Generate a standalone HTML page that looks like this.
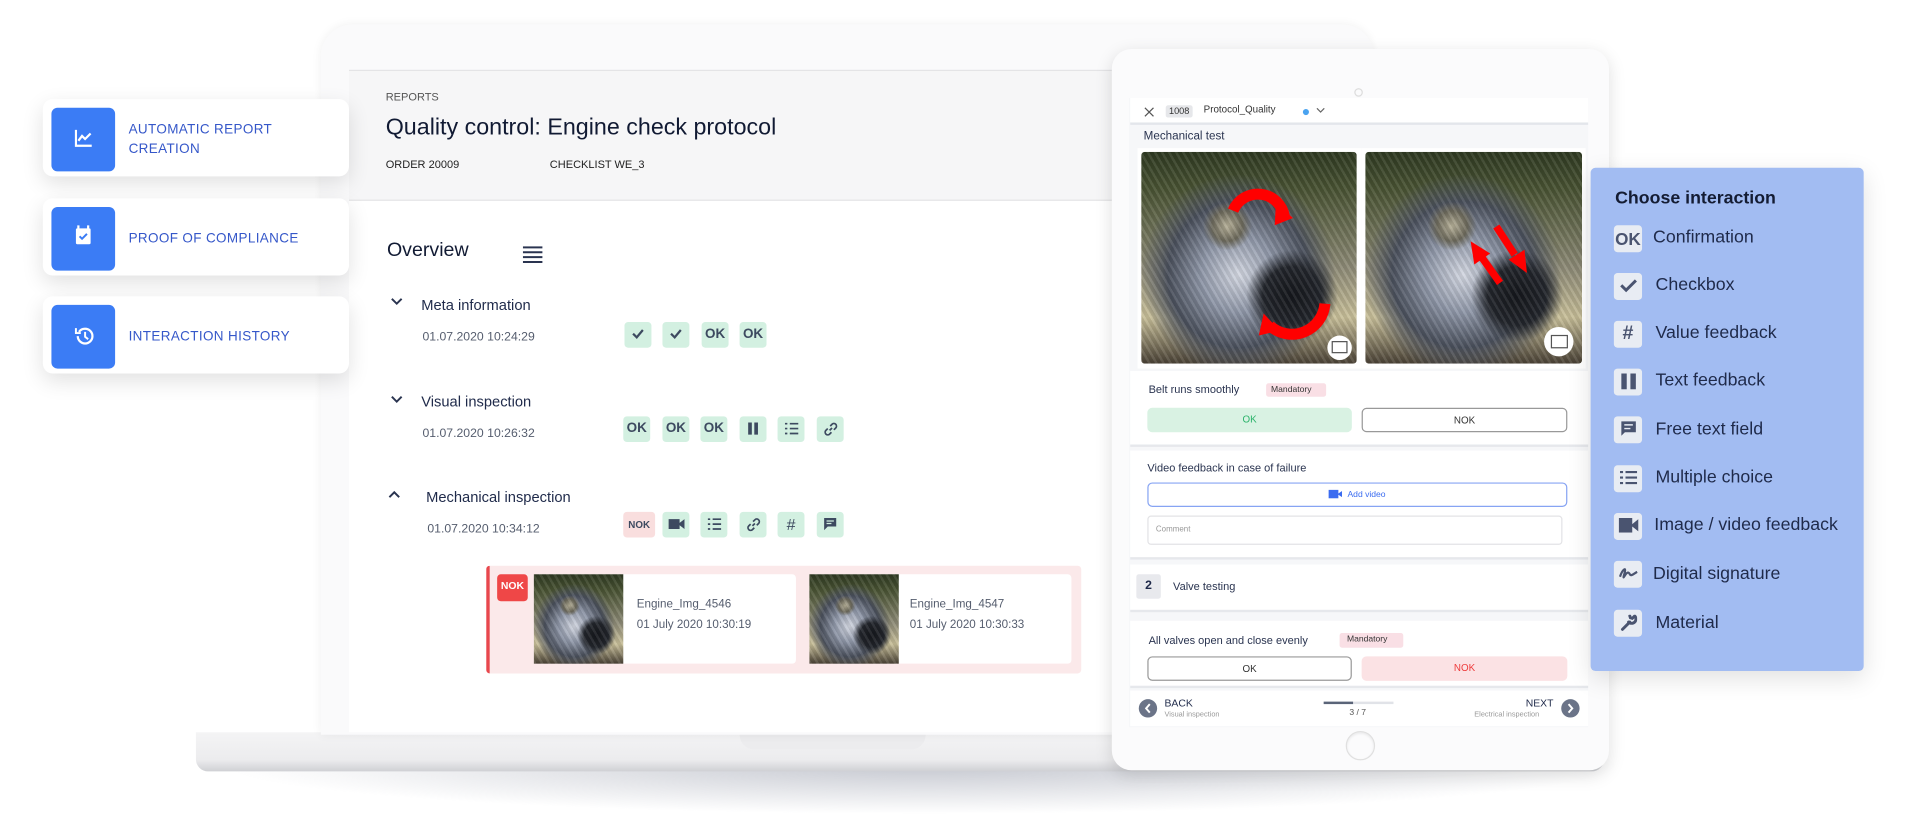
<!DOCTYPE html>
<html><head><meta charset="utf-8"><style>
*{box-sizing:border-box;margin:0;padding:0}
body{width:1920px;height:838px;overflow:hidden;background:#fff;font-family:"Liberation Sans",sans-serif;color:#1f2a4a}
#w{position:absolute;left:0;top:0;width:1568px;height:684px;transform:scale(1.22449);transform-origin:0 0}
.a{position:absolute}
.card{position:absolute;left:35px;width:250px;background:#fff;border-radius:8px;box-shadow:0 6px 18px rgba(0,0,0,.12)}
.card .ic{position:absolute;left:7px;top:7px;width:52px;height:52px;background:#3b7cf5;border-radius:5px}
.card .t{position:absolute;left:70px;font-size:11px;letter-spacing:.3px;color:#3557c9;line-height:16px}
.chip{position:absolute;width:22px;height:21px;background:#d3f0e1;border-radius:3px;font-size:11px;font-weight:bold;color:#3d4a60;text-align:center;line-height:21px}
.chip svg{margin-top:5px}
.sec{position:absolute;font-size:12px;color:#1f2a4a}
.dt{position:absolute;font-size:10px;color:#555d6e}
.pi{position:absolute;left:1319px;font-size:14.5px;color:#1f2a4a}
.pb{position:absolute;left:1318px;width:23px;height:22px;background:#e8ecf3;border-radius:3px;text-align:center;font-weight:bold;font-size:14px;color:#4a5470;line-height:22px}
.pb svg{margin-top:4px}
.eng{background:
repeating-linear-gradient(60deg,rgba(255,255,255,.08) 0 2px,rgba(0,0,0,.08) 2px 5px),
radial-gradient(circle at 70% 68%,#15171c 0,#23262c 14%,transparent 22%),
radial-gradient(circle at 40% 35%,#b8b29a 0,#6d6a5c 8%,transparent 13%),
radial-gradient(ellipse at 45% 58%,#d4d8e2 0,#8f97a8 22%,#4a505c 42%,transparent 58%),
linear-gradient(180deg,#2f3a22 0,#4a5434 18%,#8f8c78 55%,#c9c09a 78%,#4a4236 100%)}
.tb{position:absolute;left:923px;width:374px;background:#fff;border-bottom:2px solid #e6e8ec}
.btn{position:absolute;height:20px;border-radius:4px;font-size:8px;text-align:center;line-height:20px}
</style></head><body><div id="w">
<div class="a" style="left:180px;top:615px;width:1150px;height:50px;background:radial-gradient(ellipse at 50% 20%,rgba(150,155,170,.55),rgba(255,255,255,0) 70%)"></div>
<div class="a" style="left:160px;top:598px;width:1150px;height:32px;background:linear-gradient(#f4f4f5,#ececee 70%,#cfd0d4);border-radius:0 0 10px 10px"></div>
<div class="a" style="left:604px;top:598px;width:152px;height:14px;background:#ececee;border-radius:0 0 12px 12px"></div>
<div class="a" style="left:262px;top:20px;width:860px;height:580px;background:#fafafb;border-radius:26px 26px 0 0;box-shadow:0 0 8px rgba(0,0,0,.06)"></div>
<div class="a" style="left:285px;top:57px;width:820px;height:541px;background:#fff"></div>
<div class="a" style="left:285px;top:57px;width:820px;height:107px;background:#f6f6f7;border-top:1px solid #e4e4e6;border-bottom:1px solid #e4e4e6"></div>
<div class="a" style="left:315px;top:74px;font-size:9px;color:#555">REPORTS</div>
<div class="a" style="left:315px;top:94px;font-size:19px;color:#111a33">Quality control: Engine check protocol</div>
<div class="a" style="left:315px;top:129px;font-size:9px;color:#222">ORDER 20009</div>
<div class="a" style="left:449px;top:129px;font-size:9px;color:#222">CHECKLIST WE_3</div>
<div class="a" style="left:316px;top:196px;font-size:16px;color:#111a33">Overview</div>
<svg class="a" style="left:427px;top:201px" width="16" height="14"><path d="M0 1h16M0 5h16M0 9h16M0 13h16" stroke="#2a3450" stroke-width="1.6"/></svg>
<svg class="a" style="left:319px;top:243px" width="10" height="7"><path d="M1 1l4 4 4-4" stroke="#2a3450" stroke-width="1.6" fill="none"/></svg>
<div class="sec" style="left:344px;top:242px">Meta information</div>
<div class="dt" style="left:345px;top:270px">01.07.2020 10:24:29</div>
<div class="chip" style="left:510px;top:263px"><svg width="10" height="9"><path d="M1 4.5l3 3 5-6" stroke="#3d4a60" stroke-width="1.8" fill="none"/></svg></div>
<div class="chip" style="left:541px;top:263px"><svg width="10" height="9"><path d="M1 4.5l3 3 5-6" stroke="#3d4a60" stroke-width="1.8" fill="none"/></svg></div>
<div class="chip" style="left:573px;top:263px">OK</div>
<div class="chip" style="left:604px;top:263px">OK</div>
<svg class="a" style="left:319px;top:323px" width="10" height="7"><path d="M1 1l4 4 4-4" stroke="#2a3450" stroke-width="1.6" fill="none"/></svg>
<div class="sec" style="left:344px;top:321px">Visual inspection</div>
<div class="dt" style="left:345px;top:349px">01.07.2020 10:26:32</div>
<div class="chip" style="left:509px;top:340px">OK</div>
<div class="chip" style="left:541px;top:340px">OK</div>
<div class="chip" style="left:572px;top:340px">OK</div>
<div class="chip" style="left:604px;top:340px"><svg width="10" height="10"><path d="M1 0h3v10H1zM6 0h3v10H6z" fill="#3d4a60"/></svg></div>
<div class="chip" style="left:635px;top:340px"><svg width="11" height="10"><path d="M0 1h2M4 1h7M0 5h2M4 5h7M0 9h2M4 9h7" stroke="#3d4a60" stroke-width="1.4"/></svg></div>
<div class="chip" style="left:667px;top:340px"><svg width="11" height="11"><path d="M4.5 6.5l2-2M3 5L1.5 6.5a2 2 0 003 3L6 8M8 6l1.5-1.5a2 2 0 00-3-3L5 3" stroke="#3d4a60" stroke-width="1.4" fill="none"/></svg></div>
<svg class="a" style="left:317px;top:400px" width="10" height="7"><path d="M1 6l4-4 4 4" stroke="#2a3450" stroke-width="1.6" fill="none"/></svg>
<div class="sec" style="left:348px;top:399px">Mechanical inspection</div>
<div class="dt" style="left:349px;top:427px">01.07.2020 10:34:12</div>
<div class="chip" style="left:509px;top:418px;width:26px;background:#f9dede;font-size:8px">NOK</div>
<div class="chip" style="left:541px;top:418px"><svg width="13" height="10"><path d="M0 1h9v8H0zM9 4l4-3v8l-4-3z" fill="#3d4a60"/></svg></div>
<div class="chip" style="left:572px;top:418px"><svg width="11" height="10"><path d="M0 1h2M4 1h7M0 5h2M4 5h7M0 9h2M4 9h7" stroke="#3d4a60" stroke-width="1.4"/></svg></div>
<div class="chip" style="left:604px;top:418px"><svg width="11" height="11"><path d="M4.5 6.5l2-2M3 5L1.5 6.5a2 2 0 003 3L6 8M8 6l1.5-1.5a2 2 0 00-3-3L5 3" stroke="#3d4a60" stroke-width="1.4" fill="none"/></svg></div>
<div class="chip" style="left:635px;top:418px;font-size:13px;font-weight:normal">#</div>
<div class="chip" style="left:667px;top:418px"><svg width="10" height="10"><path d="M0 0h10v7H3L0 10z" fill="#3d4a60"/><path d="M2 2.5h6M2 4.5h4" stroke="#d3f0e1"/></svg></div>
<div class="a" style="left:397px;top:462px;width:486px;height:88px;background:#fbe9ea;border-left:3px solid #e8474d;border-radius:3px"></div>
<div class="a" style="left:406px;top:469px;width:25px;height:22px;background:#ef4747;border-radius:3px;color:#fff;font-size:8.5px;font-weight:bold;text-align:center;line-height:18px">NOK</div>
<div class="a" style="left:436px;top:469px;width:214px;height:73px;background:#fff;border-radius:3px"></div>
<div class="a eng" style="left:436px;top:469px;width:73px;height:73px"></div>
<div class="a" style="left:520px;top:488px;font-size:9.5px;color:#555d6e">Engine_Img_4546</div>
<div class="a" style="left:520px;top:505px;font-size:9.5px;color:#555d6e">01 July 2020 10:30:19</div>
<div class="a" style="left:661px;top:469px;width:214px;height:73px;background:#fff;border-radius:3px"></div>
<div class="a eng" style="left:661px;top:469px;width:73px;height:73px"></div>
<div class="a" style="left:743px;top:488px;font-size:9.5px;color:#555d6e">Engine_Img_4547</div>
<div class="a" style="left:743px;top:505px;font-size:9.5px;color:#555d6e">01 July 2020 10:30:33</div>
<div class="card" style="top:81px;height:63px"><div class="ic"><svg style="margin:18px 0 0 19px" width="14" height="14"><path d="M1 0v13h13" stroke="#fff" stroke-width="1.8" fill="none"/><path d="M3 9l3-4 2.5 2.5L13 3" stroke="#fff" stroke-width="1.8" fill="none"/></svg></div><div class="t" style="top:17px">AUTOMATIC REPORT<br>CREATION</div></div>
<div class="card" style="top:162px;height:63px"><div class="ic"><svg style="margin:15px 0 0 19px" width="14" height="17"><path d="M3 0v3M11 0v3" stroke="#fff" stroke-width="1.8"/><rect x="1" y="2.5" width="12" height="13" rx="1" fill="#fff"/><path d="M4 9l2 2 4-4" stroke="#3b7cf5" stroke-width="1.6" fill="none"/></svg></div><div class="t" style="top:25px">PROOF OF COMPLIANCE</div></div>
<div class="card" style="top:242px;height:63px"><div class="ic"><svg style="margin:17px 0 0 18px" width="17" height="17"><path d="M3.5 8.5a6 6 0 106-6 6 6 0 00-5 2.5" stroke="#fff" stroke-width="1.8" fill="none"/><path d="M2 2v4h4" stroke="#fff" stroke-width="1.6" fill="none"/><path d="M9.5 5v4l2.5 2" stroke="#fff" stroke-width="1.6" fill="none"/></svg></div><div class="t" style="top:25px">INTERACTION HISTORY</div></div>
<div class="a" style="left:908px;top:40px;width:406px;height:589px;background:#fbfbfc;border-radius:16px;box-shadow:0 4px 14px rgba(0,0,0,.13)"></div>
<div class="a" style="left:1106px;top:72px;width:7px;height:7px;border:1px solid #ddd;border-radius:50%"></div>
<div class="a" style="left:1099px;top:597px;width:24px;height:24px;border:1px solid #e0e0e0;border-radius:50%;box-shadow:inset 0 1px 2px rgba(0,0,0,.08)"></div>
<div class="a" style="left:922px;top:80px;width:375px;height:514px;background:#f6f7f9"></div>
<div class="tb" style="top:80px;height:22px;border-bottom:2px solid #e3e6eb"></div>
<svg class="a" style="left:934px;top:87px" width="9" height="9"><path d="M1 1l7 7M8 1L1 8" stroke="#555" stroke-width="1"/></svg>
<div class="a" style="left:952px;top:86px;width:22px;height:10px;background:#e6e7ea;border-radius:2px;font-size:7.5px;text-align:center;line-height:10px;color:#333">1008</div>
<div class="a" style="left:983px;top:85px;font-size:8px;color:#333">Protocol_Quality</div>
<div class="a" style="left:1064px;top:89px;width:5px;height:5px;background:#4aa3f0;border-radius:50%"></div>
<svg class="a" style="left:1075px;top:88px" width="7" height="5"><path d="M.5.5l3 3 3-3" stroke="#666" fill="none"/></svg>
<div class="a" style="left:934px;top:106px;font-size:9.5px;color:#2a3450">Mechanical test</div>
<div class="a" style="left:929px;top:121px;width:183px;height:180px;background:#fff"></div>
<div class="a eng" style="left:932px;top:124px;width:176px;height:173px;border-radius:3px"></div>
<svg class="a" style="left:932px;top:124px" width="176" height="173"><path d="M75 48a22 22 0 0142 5" stroke="#f00" stroke-width="9" fill="none"/><path d="M110 42l14 12-15 6z" fill="#f00"/><path d="M150 124a27 27 0 01-45 18" stroke="#f00" stroke-width="9" fill="none"/><path d="M100 132l-4 18 17-4z" fill="#f00"/><circle cx="162" cy="160" r="10" fill="#fff"/><rect x="156" y="155" width="12" height="9" fill="none" stroke="#555" stroke-width="1"/></svg>
<div class="a" style="left:1112px;top:121px;width:183px;height:180px;background:#fff"></div>
<div class="a eng" style="left:1115px;top:124px;width:177px;height:173px;border-radius:3px"></div>
<svg class="a" style="left:1115px;top:124px" width="177" height="173"><path d="M110 107L95 86" stroke="#f00" stroke-width="6"/><path d="M86 73l3 19 13-9z" fill="#f00"/><path d="M107 61l15 23" stroke="#f00" stroke-width="6"/><path d="M132 99l-2-19-13 8z" fill="#f00"/><circle cx="158" cy="155" r="12" fill="#fff"/><rect x="152" y="150" width="13" height="10" fill="none" stroke="#555" stroke-width="1"/></svg>
<div class="tb" style="top:303px;height:62px"></div>
<div class="a" style="left:938px;top:313px;font-size:9px;color:#2a3450">Belt runs smoothly</div>
<div class="a" style="left:1034px;top:313px;width:49px;height:11px;background:#f9dfe5;border-radius:2px;font-size:7px;line-height:11px;padding-left:4px;color:#333">Mandatory</div>
<div class="btn" style="left:937px;top:333px;width:167px;background:#d9f2e3;color:#2ab36a">OK</div>
<div class="btn" style="left:1112px;top:333px;width:168px;border:1px solid #999;color:#333;background:#fff">NOK</div>
<div class="tb" style="top:368px;height:89px"></div>
<div class="a" style="left:937px;top:377px;font-size:9px;color:#2a3450">Video feedback in case of failure</div>
<div class="btn" style="left:937px;top:394px;width:343px;border:1px solid #87a4f3;background:#fff;color:#3b6cf0;font-size:7px">
<svg width="11" height="7" style="vertical-align:-1px;margin-right:4px"><path d="M0 0h8v7H0zM8 3l3-2v5L8 4z" fill="#3b6cf0"/></svg>Add video</div>
<div class="a" style="left:937px;top:421px;width:339px;height:24px;border:1px solid #e3e3e6;border-radius:3px;font-size:6.5px;color:#999;padding:7px 6px">Comment</div>
<div class="tb" style="top:461px;height:39px"></div>
<div class="a" style="left:928px;top:469px;width:20px;height:20px;background:#e8e9ed;border-radius:2px;font-size:10px;font-weight:bold;text-align:center;line-height:20px">2</div>
<div class="a" style="left:958px;top:474px;font-size:9px;color:#2a3450">Valve testing</div>
<div class="tb" style="top:507px;height:55px"></div>
<div class="a" style="left:938px;top:518px;font-size:9px;color:#2a3450">All valves open and close evenly</div>
<div class="a" style="left:1094px;top:517px;width:52px;height:12px;background:#f9dfe5;border-radius:2px;font-size:7px;line-height:12px;padding-left:6px;color:#333">Mandatory</div>
<div class="btn" style="left:937px;top:536px;width:167px;border:1px solid #999;color:#333;background:#fff">OK</div>
<div class="btn" style="left:1112px;top:536px;width:168px;background:#fbe2e4;color:#ee3c3c">NOK</div>
<div class="a" style="left:923px;top:564px;width:374px;height:29px;background:#fff"></div>
<div class="a" style="left:930px;top:571px;width:15px;height:15px;background:#6b7488;border-radius:50%"></div>
<svg class="a" style="left:934px;top:574px" width="7" height="9"><path d="M5 1L2 4.5 5 8" stroke="#fff" stroke-width="1.6" fill="none"/></svg>
<div class="a" style="left:951px;top:569px;font-size:8.5px;color:#1f2a4a">BACK</div>
<div class="a" style="left:951px;top:581px;font-size:6px;color:#999">Visual inspection</div>
<div class="a" style="left:1081px;top:573px;width:57px;height:2px;background:#e1e3e8"></div>
<div class="a" style="left:1081px;top:573px;width:24px;height:2px;background:#5a6478"></div>
<div class="a" style="left:1102px;top:579px;font-size:7px;color:#555">3 / 7</div>
<div class="a" style="left:1246px;top:569px;font-size:8.5px;color:#1f2a4a">NEXT</div>
<div class="a" style="left:1204px;top:581px;font-size:6px;color:#999">Electrical inspection</div>
<div class="a" style="left:1275px;top:571px;width:15px;height:15px;background:#6b7488;border-radius:50%"></div>
<svg class="a" style="left:1279px;top:574px" width="7" height="9"><path d="M2 1l3 3.5L2 8" stroke="#fff" stroke-width="1.6" fill="none"/></svg>
<div class="a" style="left:1299px;top:137px;width:223px;height:411px;background:#a2bcf2;border-radius:4px;box-shadow:0 6px 20px rgba(0,0,0,.12)"></div>
<div class="a" style="left:1319px;top:154px;font-size:14.5px;font-weight:bold;color:#141c33">Choose interaction</div>
<div class="pb" style="top:184px">OK</div><div class="pi" style="left:1350px;top:186px">Confirmation</div>
<div class="pb" style="top:223px"><svg width="14" height="12"><path d="M1 6l4 4 8-8" stroke="#4a5470" stroke-width="2.4" fill="none"/></svg></div><div class="pi" style="left:1352px;top:225px">Checkbox</div>
<div class="pb" style="top:262px;font-size:16px">#</div><div class="pi" style="left:1352px;top:264px">Value feedback</div>
<div class="pb" style="top:301px"><svg width="12" height="13"><path d="M0 0h4.5v13H0zM7.5 0H12v13H7.5z" fill="#4a5470"/></svg></div><div class="pi" style="left:1352px;top:303px">Text feedback</div>
<div class="pb" style="top:340px"><svg width="12" height="12"><path d="M0 0h12v9H3L0 12z" fill="#4a5470"/><path d="M2.5 3h7M2.5 6h5" stroke="#e8ecf3" stroke-width="1.2"/></svg></div><div class="pi" style="left:1352px;top:343px">Free text field</div>
<div class="pb" style="top:380px"><svg width="14" height="12"><path d="M0 1.5h2.5M4.5 1.5H14M0 6h2.5M4.5 6H14M0 10.5h2.5M4.5 10.5H14" stroke="#4a5470" stroke-width="1.8"/></svg></div><div class="pi" style="left:1352px;top:382px">Multiple choice</div>
<div class="pb" style="top:419px"><svg width="16" height="12"><path d="M0 0h11v12H0zM11 5l5-4v10l-5-4z" fill="#4a5470"/></svg></div><div class="pi" style="left:1351px;top:421px">Image / video feedback</div>
<div class="pb" style="top:458px"><svg width="16" height="12"><path d="M1 9c2-6 5-8 4-4s-2 6 0 3 3-3 4-1 4-1 6-2" stroke="#4a5470" stroke-width="1.8" fill="none"/></svg></div><div class="pi" style="left:1350px;top:461px">Digital signature</div>
<div class="pb" style="top:498px"><svg width="14" height="14"><path d="M2 12l6-6M7 6a3.5 3.5 0 105-5l-2 2-1.5-.5L8 1" stroke="#4a5470" stroke-width="2.4" fill="none" stroke-linecap="round"/></svg></div><div class="pi" style="left:1352px;top:501px">Material</div>
</div></body></html>
